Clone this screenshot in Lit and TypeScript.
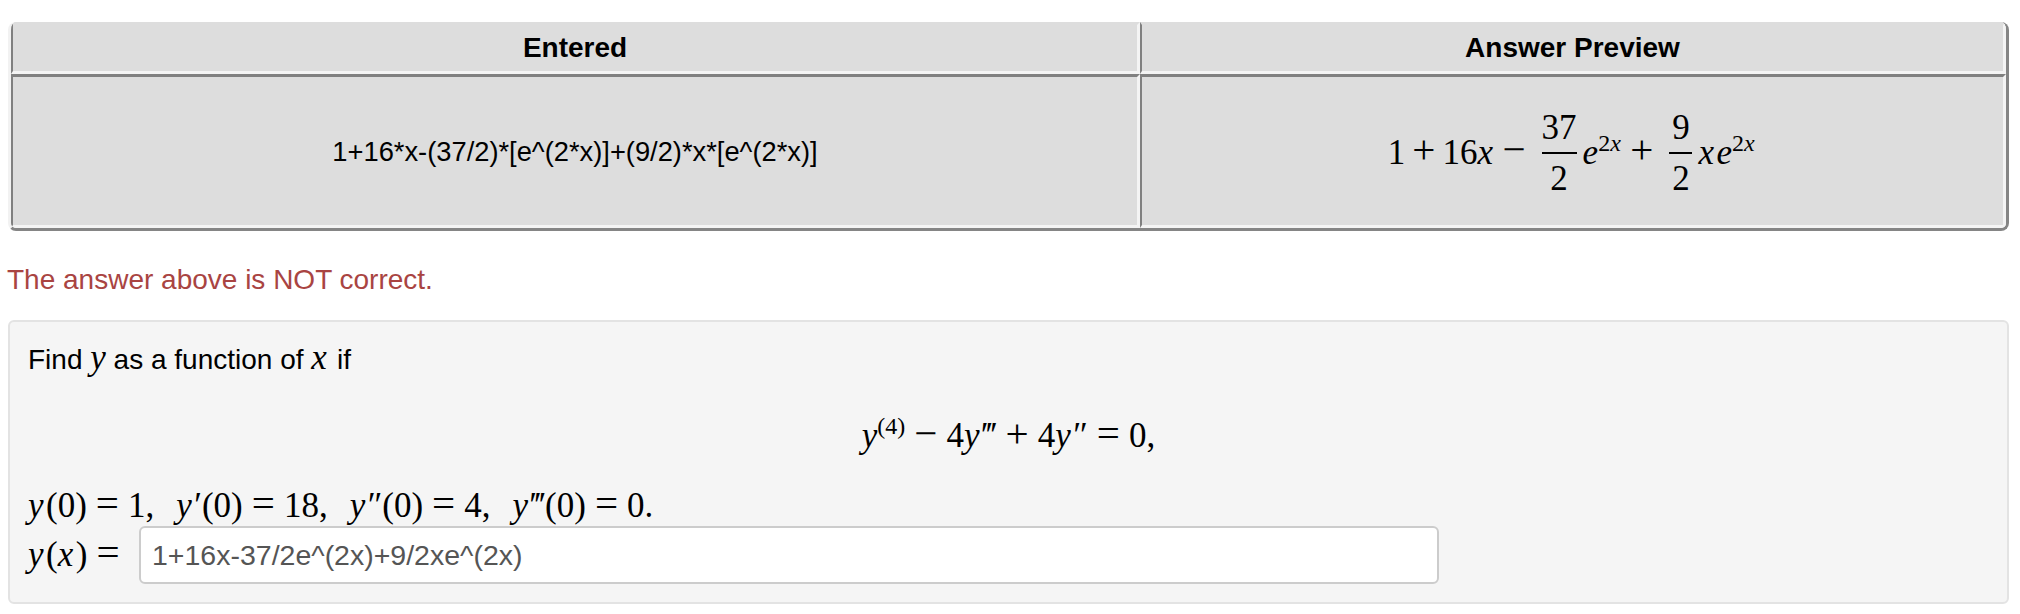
import { LitElement, html, css } from "lit";
import { customElement } from "lit/decorators.js";

@customElement("app-root")
export class AppRoot extends LitElement {
  static styles = css`
    :host { display: block; width: 2020px; height: 614px; overflow: hidden; background: #fff; font-family: "Liberation Sans", Arial, sans-serif; color: #000; }
    .page { padding: 22px 11px 0 8px; display: flex; flex-direction: column; }
    .results { display: grid; grid-template-columns: 1129px 1fr; background: #fff; border-style: solid; border-width: 0 3px 3px 3px; border-color: #fff #858585 #858585 #f2f2f2; border-radius: 8px; overflow: hidden; }
    .cell { box-sizing: border-box; background: #ddd; border-style: solid; border-width: 3px 3px 3px 2px; border-color: #808080 #f4f4f4 #f4f4f4 #808080; display: flex; align-items: center; justify-content: center; }
    .head { height: 52px; font-size: 28px; font-weight: 700; border-top-color: #ddd; }
    .body { height: 154px; font-size: 27.3px; padding-top: 2px; }
    .preview { padding-top: 8px; }
    .alert { color: #a94442; font-size: 28px; line-height: 40px; margin: 29px 0 20px -1px; }
    .well { background: #f5f5f5; border: 2px solid #e3e3e3; border-radius: 6px; height: 284px; box-sizing: border-box; padding: 0 18px; display: flex; flex-direction: column; font-size: 28px; }
    .line { display: flex; align-items: center; height: 40px; white-space: pre; }
    .find { line-height: 40px; height: 40px; margin-top: 18px; white-space: pre; }
    .find .m { line-height: 0; }
    .display { justify-content: center; margin-top: 36px; }
    .eqs { margin-top: 30px; }
    .answer { height: 58px; }
    .m { font-family: "Liberation Serif", "Times New Roman", serif; font-size: 35px; white-space: pre; }
    .i { font-style: italic; letter-spacing: 2.5px; }
    .t { font-style: italic; }
    .op { font-size: 41px; line-height: 0; margin: 0 9px; }
    .body .op { margin: 0 7px; }
    .gap { margin-left: 22px; }
    sup { font-size: 24px; line-height: 0; vertical-align: 13px; }
    .frac { display: inline-flex; flex-direction: column; align-items: center; min-width: 23px; vertical-align: middle; margin: 0 6px 5px 9px; }
    .frac span { line-height: 49px; text-align: center; align-self: stretch; }
    .frac span:first-child { border-bottom: 2px solid #000; }
    .label { width: 111px; flex: none; }
    .field { width: 1300px; height: 58px; box-sizing: border-box; border: 2px solid #ccc; border-radius: 6px; background: #fff; padding: 0 11px; display: flex; align-items: center; font-size: 28.5px; color: #555; }
  `;

  render() {
    return html`<div class="page">
      <div class="results">
        <div class="cell head">Entered</div>
        <div class="cell head">Answer Preview</div>
        <div class="cell body">1+16*x-(37/2)*[e^(2*x)]+(9/2)*x*[e^(2*x)]</div>
        <div class="cell body preview"><span class="m">1<span class="op">+</span>16<span class="i">x</span><span class="op">−</span><span class="frac"><span>37</span><span>2</span></span><span class="t">e</span><sup>2<span class="i">x</span></sup><span class="op">+</span><span class="frac"><span>9</span><span>2</span></span><span class="i">x</span><span class="t">e</span><sup>2<span class="i">x</span></sup></span></div>
      </div>
      <div class="alert">The answer above is NOT correct.</div>
      <div class="well">
        <div class="find">Find <span class="m t">y</span> as a function of <span class="m i">x</span> if</div>
        <div class="line display"><span class="m"><span class="t">y</span><sup>(4)</sup><span class="op">−</span>4<span class="i">y</span>‴<span class="op">+</span>4<span class="i">y</span>″<span class="op">=</span>0,</span></div>
        <div class="line eqs"><span class="m"><span class="i">y</span>(0)<span class="op">=</span>1,<span class="gap"></span><span class="i">y</span>′(0)<span class="op">=</span>18,<span class="gap"></span><span class="i">y</span>″(0)<span class="op">=</span>4,<span class="gap"></span><span class="i">y</span>‴(0)<span class="op">=</span>0.</span></div>
        <div class="line answer"><span class="m label"><span class="i">y</span>(<span class="i">x</span>)<span class="op">=</span></span><div class="field">1+16x-37/2e^(2x)+9/2xe^(2x)</div></div>
      </div>
    </div>`;
  }
}
